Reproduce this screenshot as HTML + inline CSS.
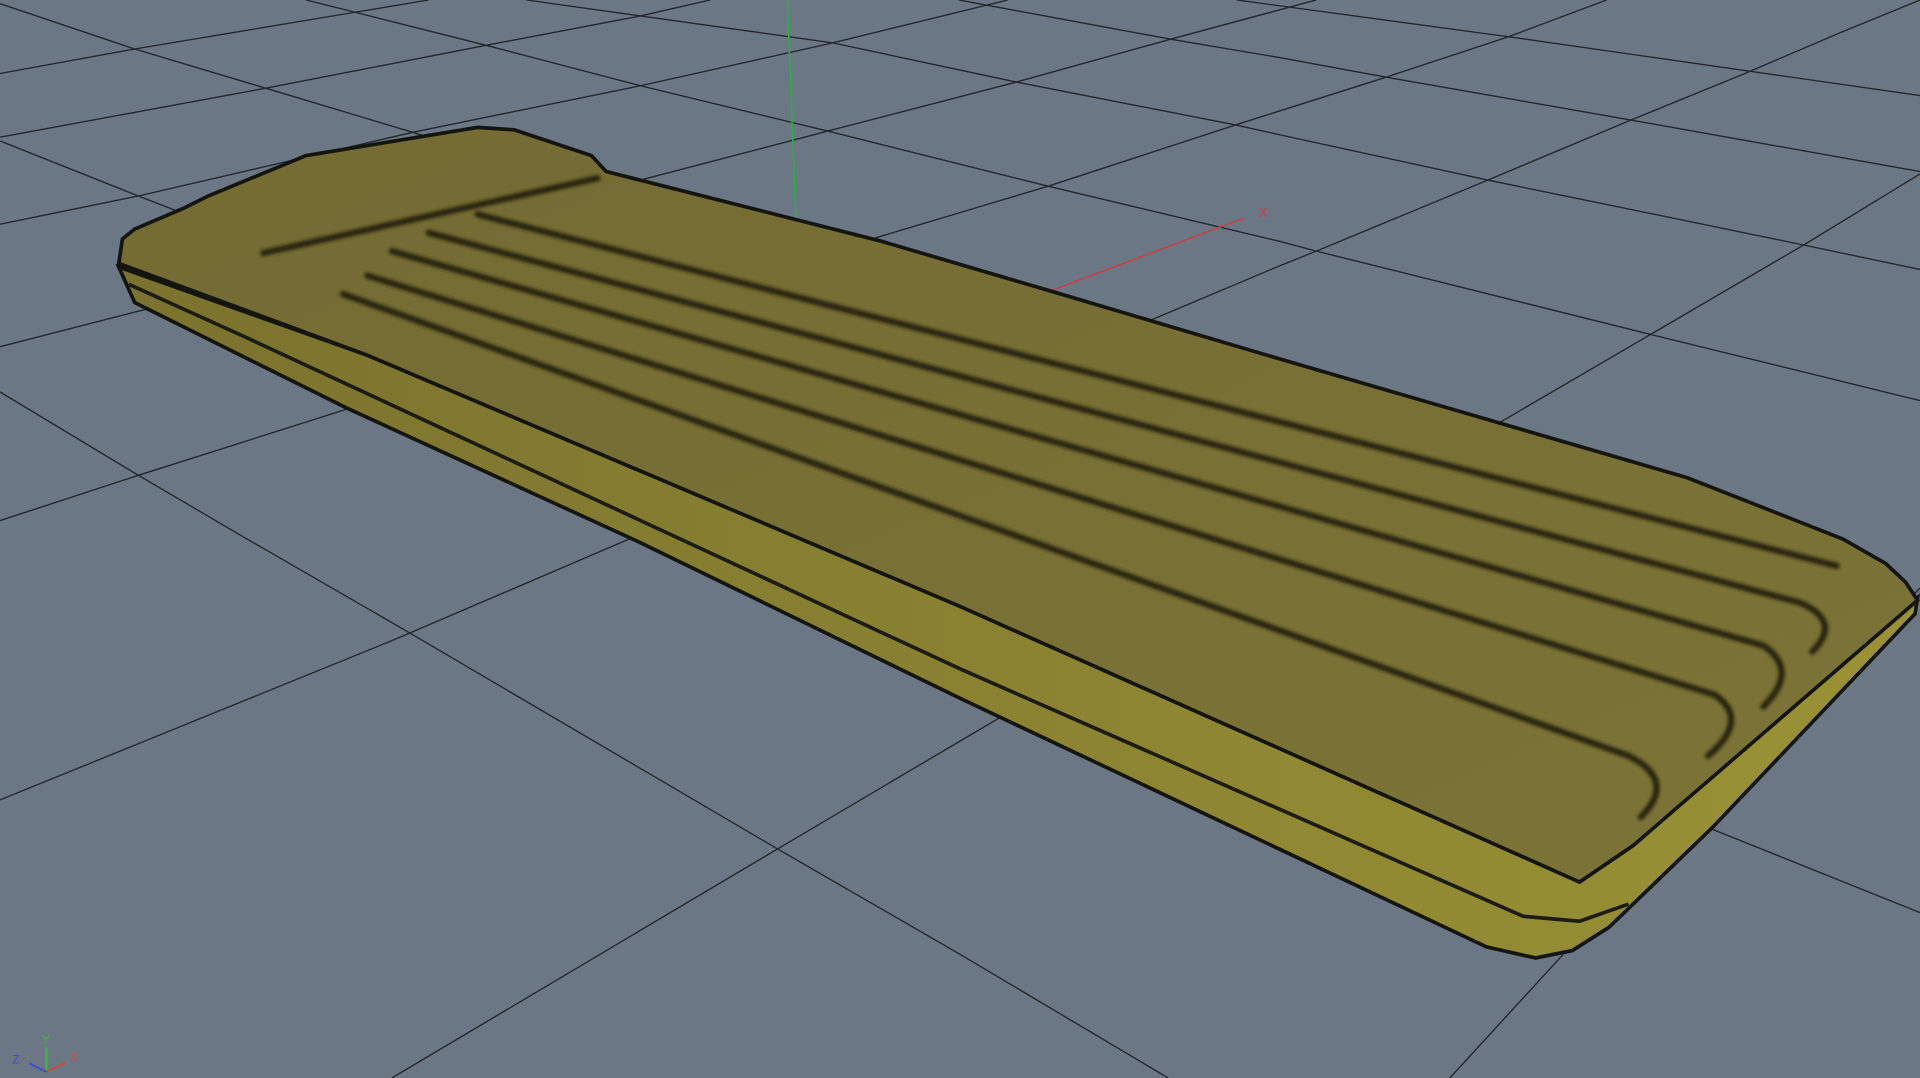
<!DOCTYPE html>
<html><head><meta charset="utf-8"><style>html,body{margin:0;padding:0;width:1920px;height:1078px;background:#6b7785;overflow:hidden}svg{display:block;position:absolute;left:0;top:0}</style></head>
<body>
<svg width="1920" height="1078" viewBox="0 0 1568 880" preserveAspectRatio="none" xmlns="http://www.w3.org/2000/svg">
<defs>
<linearGradient id="side" x1="0" y1="0" x2="1" y2="0"><stop offset="0" stop-color="#7a722e"/><stop offset="0.6" stop-color="#8e8632"/><stop offset="1" stop-color="#9a9234"/></linearGradient>
<linearGradient id="top" x1="0" y1="0" x2="1" y2="1"><stop offset="0" stop-color="#736b33"/><stop offset="1" stop-color="#7c7436"/></linearGradient>
<filter id="bl"><feGaussianBlur stdDeviation="1.5"/></filter>
</defs>
<rect width="1568" height="880" fill="#6b7785"/>
<g stroke="#22262b" stroke-width="1.1" fill="none">
<polyline points="0,3 110,40 217,72 337,108 420,134"/>
<polyline points="250,0 290,10 397,37 523,70 676,107 856,152 1045,197 1075,205 1348,273 1568,327"/>
<polyline points="0,115 113,160 250,213"/>
<polyline points="0,320 113,388 200,439 330,514 635,693 784,779 954,880"/>
<polyline points="430,0 523,13 680,35 830,67 1009,102 1045,110 1215,147 1473,200 1568,220"/>
<polyline points="783,0 956,32 1045,47 1132,63 1332,98 1568,140"/>
<polyline points="1010,0 1232,30 1568,78"/>
<polyline points="1200,600 1396,676 1568,745"/>
<polyline points="0,60 110,40 290,10 350,0"/>
<polyline points="0,112 217,72 397,37 523,13 580,0"/>
<polyline points="0,183 113,160 337,108 523,70 680,35 823,0"/>
<polyline points="0,283 117,253 523,147 676,107 830,67 956,32 1045,8 1075,0"/>
<polyline points="0,425 113,388 280,335 719,193 856,152 1009,102 1132,63 1232,30 1312,0"/>
<polyline points="0,653 320,523 507,443 943,260 1045,217 1075,205 1215,147 1332,98 1425,60 1502,27 1568,0"/>
<polyline points="320,880 635,693 784,605 1228,343 1348,273 1473,200 1568,142"/>
<polyline points="1184,880 1284,771 1568,480"/>
</g>
<line x1="643" y1="0" x2="653" y2="257" stroke="#2bb040" stroke-width="1.3"/>
<line x1="859" y1="237" x2="1016" y2="178" stroke="#c84040" stroke-width="1.2"/>
<text x="1028" y="177" fill="#c84040" font-family="Liberation Sans, sans-serif" font-size="11">X</text>
<!-- side -->
<path d="M97,218 L110,247 L283,333 L523,443 L784,570 L1214,773 L1254,782 L1284,776 L1314,757 L1399,675 L1564,501 L1566,488 L1334,690 L1290,720 L784,495 L300,290 Z" fill="url(#side)" stroke="#151510" stroke-width="3"/>
<path d="M105,232 L200,275 L784,546 L1244,748 L1290,752 L1330,738" stroke="#1c1c14" stroke-width="3" fill="none"/>
<!-- top -->
<path d="M97,215 L100,195 L110,187 L150,170 L170,160 L250,127 L390,104 L420,106 L483,127 L495,140 L720,197 L856,237 L1045,293 L1378,390 L1505,440 L1540,460 L1556,475 L1566,490 L1334,690 L1290,720 L784,495 L300,290 Z" fill="url(#top)" stroke="#151510" stroke-width="3"/>
<g filter="url(#bl)">
<path d="M213,207 L490,145" fill="none" stroke="#25230f" stroke-width="5"/>
<g stroke="#25230f" stroke-width="5" fill="none" stroke-linecap="round">
<path d="M390,175 L1500,462"/>
<path d="M350,190 L1470,492 Q1505,507 1480,532"/>
<path d="M320,205 L1440,527 Q1470,547 1440,577"/>
<path d="M300,225 L1400,567 Q1430,587 1395,617"/>
<path d="M280,240 L1330,617 Q1370,637 1340,667"/>
</g>
</g>
<g font-family="Liberation Sans, sans-serif" font-size="10">
<line x1="38" y1="875" x2="38" y2="855" stroke="#3bbf3b" stroke-width="1.5"/>
<text x="34" y="852" fill="#3bbf3b">Y</text>
<line x1="38" y1="875" x2="54" y2="867" stroke="#d04a3a" stroke-width="1.5"/>
<text x="57" y="866" fill="#d04a3a">X</text>
<line x1="38" y1="875" x2="24" y2="868" stroke="#3a4ed0" stroke-width="1.5"/>
<text x="10" y="868" fill="#3a4ed0">Z</text>
</g>
</svg>
</body></html>
